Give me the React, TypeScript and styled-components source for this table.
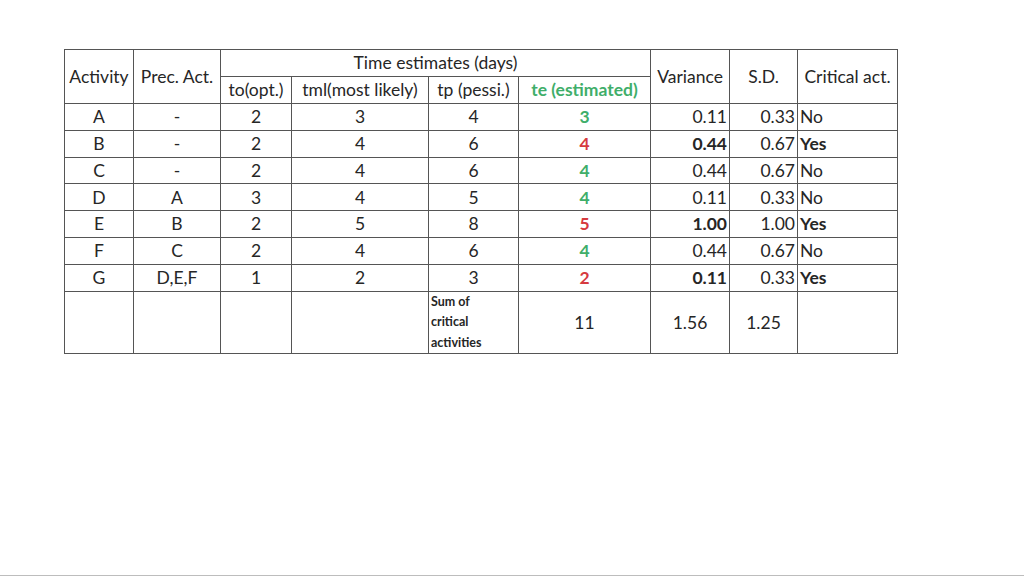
import React from "react";
import styled, { createGlobalStyle } from "styled-components";

const Global = createGlobalStyle`
  html, body { margin: 0; padding: 0; background: #fff; }
  body { font-family: Lato, "Open Sans", "Liberation Sans", sans-serif; }
`;

const Page = styled.div`
  box-sizing: border-box;
  width: 1024px;
  height: 576px;
  padding: 49px 0 0 64px;
  border-bottom: 1px solid #bdbdbd;
  background: #fff;
`;

const Sheet = styled.table`
  border-collapse: collapse;
  table-layout: fixed;
  width: 833px;
  color: #262626;
  font-size: 17.5px;
`;

const HeadCell = styled.th<{ $green?: boolean; $h: number }>`
  border: 1px solid #555;
  height: ${(p) => p.$h}px;
  padding: 0 1px;
  font-weight: ${(p) => (p.$green ? 700 : 400)};
  color: ${(p) => (p.$green ? "#3fae6a" : "#262626")};
  text-align: center;
  vertical-align: middle;
  white-space: nowrap;
  line-height: 1;
`;

type Align = "center" | "right" | "left";
type Tone = "green" | "red" | undefined;

const Cell = styled.td<{ $align?: Align; $tone?: Tone; $bold?: boolean; $h?: number }>`
  border: 1px solid #555;
  height: ${(p) => p.$h ?? 25.8}px;
  padding: 0 2px;
  text-align: ${(p) => p.$align ?? "center"};
  vertical-align: middle;
  white-space: nowrap;
  line-height: 1;
  font-weight: ${(p) => (p.$bold || p.$tone ? 700 : 400)};
  color: ${(p) =>
    p.$tone === "green" ? "#3fae6a" : p.$tone === "red" ? "#d63a3f" : "#262626"};
`;

const SumNote = styled.div`
  font-size: 12.5px;
  font-weight: 700;
  line-height: 20.5px;
  text-align: left;
  white-space: normal;
  padding-left: 0;
  color: #262626;
`;

const widths = [69, 87, 71, 137, 90, 132, 79, 68, 100];

const rows = [
  { a: "A", p: "-", to: "2", tml: "3", tp: "4", te: "3", crit: false, v: "0.11", sd: "0.33" },
  { a: "B", p: "-", to: "2", tml: "4", tp: "6", te: "4", crit: true, v: "0.44", sd: "0.67" },
  { a: "C", p: "-", to: "2", tml: "4", tp: "6", te: "4", crit: false, v: "0.44", sd: "0.67" },
  { a: "D", p: "A", to: "3", tml: "4", tp: "5", te: "4", crit: false, v: "0.11", sd: "0.33" },
  { a: "E", p: "B", to: "2", tml: "5", tp: "8", te: "5", crit: true, v: "1.00", sd: "1.00" },
  { a: "F", p: "C", to: "2", tml: "4", tp: "6", te: "4", crit: false, v: "0.44", sd: "0.67" },
  { a: "G", p: "D,E,F", to: "1", tml: "2", tp: "3", te: "2", crit: true, v: "0.11", sd: "0.33" },
];

export default function App() {
  return (
    <Page>
      <Global />
      <Sheet>
        <colgroup>
          {widths.map((w, i) => (
            <col key={i} style={{ width: w }} />
          ))}
        </colgroup>
        <thead>
          <tr>
            <HeadCell rowSpan={2} $h={25.5}>Activity</HeadCell>
            <HeadCell rowSpan={2} $h={25.5}>Prec. Act.</HeadCell>
            <HeadCell colSpan={4} $h={25.5}>Time estimates (days)</HeadCell>
            <HeadCell rowSpan={2} $h={25.5}>Variance</HeadCell>
            <HeadCell rowSpan={2} $h={25.5}>S.D.</HeadCell>
            <HeadCell rowSpan={2} $h={25.5}>Critical act.</HeadCell>
          </tr>
          <tr>
            <HeadCell $h={26.5}>to(opt.)</HeadCell>
            <HeadCell $h={26.5}>tml(most likely)</HeadCell>
            <HeadCell $h={26.5}>tp (pessi.)</HeadCell>
            <HeadCell $h={26.5} $green>te (estimated)</HeadCell>
          </tr>
        </thead>
        <tbody>
          {rows.map((r) => (
            <tr key={r.a}>
              <Cell>{r.a}</Cell>
              <Cell>{r.p}</Cell>
              <Cell>{r.to}</Cell>
              <Cell>{r.tml}</Cell>
              <Cell>{r.tp}</Cell>
              <Cell $tone={r.crit ? "red" : "green"}>{r.te}</Cell>
              <Cell $align="right" $bold={r.crit}>{r.v}</Cell>
              <Cell $align="right">{r.sd}</Cell>
              <Cell $align="left" $bold={r.crit}>{r.crit ? "Yes" : "No"}</Cell>
            </tr>
          ))}
          <tr>
            <Cell $h={60} />
            <Cell $h={60} />
            <Cell $h={60} />
            <Cell $h={60} />
            <Cell $h={60} $align="left">
              <SumNote>
                Sum of
                <br />
                critical
                <br />
                activities
              </SumNote>
            </Cell>
            <Cell $h={60}>11</Cell>
            <Cell $h={60}>1.56</Cell>
            <Cell $h={60}>1.25</Cell>
            <Cell $h={60} />
          </tr>
        </tbody>
      </Sheet>
    </Page>
  );
}
